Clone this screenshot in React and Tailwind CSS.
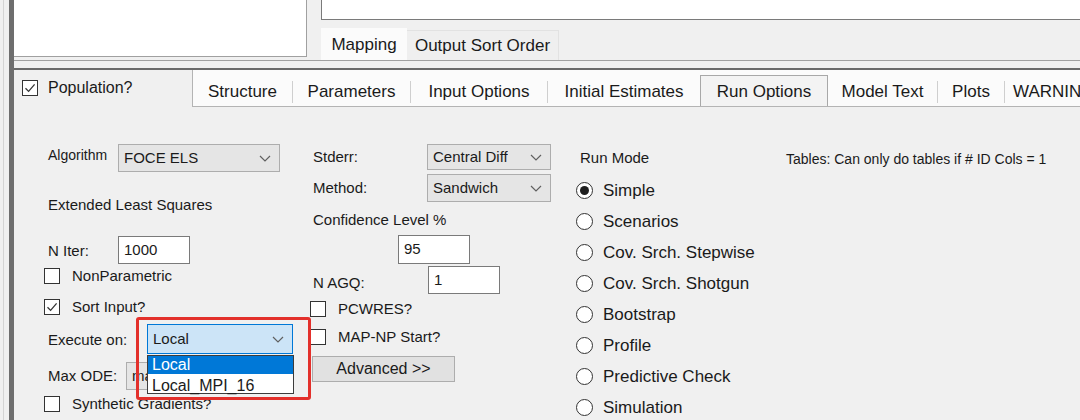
import React from 'react';

const tabs = [
  { label: 'Structure', w: 'w-[100px]' },
  { label: 'Parameters', w: 'w-[118px]' },
  { label: 'Input Options', w: 'w-[137px]' },
  { label: 'Initial Estimates', w: 'w-[152px]', noSep: true },
  { label: 'Run Options', w: 'w-[128px]', active: true },
  { label: 'Model Text', w: 'w-[110px]' },
  { label: 'Plots', w: 'w-[67px]' },
  { label: 'WARNINGS', w: 'w-[110px]' },
];

const runModes = [
  'Simple',
  'Scenarios',
  'Cov. Srch. Stepwise',
  'Cov. Srch. Shotgun',
  'Bootstrap',
  'Profile',
  'Predictive Check',
  'Simulation',
];

function Chevron() {
  return (
    <svg width="12" height="7" viewBox="0 0 12 7" className="shrink-0">
      <path d="M1 1 L6 6 L11 1" fill="none" stroke="#606060" strokeWidth="1.2" />
    </svg>
  );
}

function Check({ checked }) {
  return (
    <span className="w-[16px] h-[16px] border border-[#333333] bg-white flex items-center justify-center shrink-0">
      {checked && (
        <svg width="12" height="12" viewBox="0 0 12 12">
          <path d="M1.5 6.2 L4.6 9.4 L10.6 2.4" fill="none" stroke="#333333" strokeWidth="1.3" />
        </svg>
      )}
    </span>
  );
}

function Radio({ on }) {
  return (
    <span className="w-[17px] h-[17px] rounded-full border border-[#333333] bg-white flex items-center justify-center shrink-0">
      {on && <span className="w-[9px] h-[9px] rounded-full bg-[#1e1e1e]" />}
    </span>
  );
}

function Select({ className, text }) {
  return (
    <div className={'flex items-center justify-between pl-[5px] pr-[8px] border text-[15px] shrink-0 ' + className}>
      <span className="whitespace-nowrap overflow-hidden">{text}</span>
      <Chevron />
    </div>
  );
}

function CheckRow({ label, checked, className }) {
  return (
    <div className={'flex items-center gap-[12px] h-[16px] shrink-0 text-[15px] ' + className}>
      <Check checked={checked} />
      <span className="whitespace-nowrap">{label}</span>
    </div>
  );
}

export default function App() {
  return (
    <div className="relative w-[1080px] h-[420px] overflow-hidden bg-[#f0f0f0] flex text-[#1a1a1a] font-['Liberation_Sans',Arial,sans-serif]">
      {/* left edge */}
      <div className="w-[9px] shrink-0 flex">
        <div className="w-[3px]" />
        <div className="w-[1px] bg-[#d4d4d4]" />
      </div>
      <div className="w-[5px] shrink-0 bg-[#6e6e6e]" />

      <div className="flex-1 min-w-0 flex flex-col overflow-hidden">
        {/* top area */}
        <div className="flex h-[60px] shrink-0">
          <div className="w-[293px] shrink-0 h-[57px] bg-white border-r border-b border-[#a0a0a0]" />
          <div className="w-[14px] shrink-0" />
          <div className="flex-1 min-w-0 flex flex-col">
            <div className="h-[20px] shrink-0 bg-white border-l border-b border-[#7a7a7a]" />
            <div className="flex mt-[8px] h-[32px] shrink-0 items-end text-[17px]">
              <div className="w-[86px] h-[32px] bg-[#fbfbfb] flex items-center justify-center pt-[1px]">Mapping</div>
              <div className="w-[152px] h-[30px] bg-[#efefef] border-t border-r border-[#e2e2e2] flex items-center justify-center -mt-[1px]">
                Output Sort Order
              </div>
            </div>
          </div>
        </div>
        <div className="h-[1px] shrink-0 bg-[#a0a0a0]" />
        <div className="h-[7px] shrink-0" />
        <div className="h-[2px] shrink-0 bg-[#6a6a6a]" />

        {/* tab header */}
        <div className="flex h-[37px] shrink-0">
          <div className="w-[178px] shrink-0 flex items-start pl-[8px] pt-[10px] gap-[10px]">
            <Check checked />
            <span className="text-[16px] leading-[16px]">Population?</span>
          </div>
          <div className="flex-1 min-w-0 overflow-hidden flex bg-[#fbfbfb] border-l border-b border-[#b4b4b4] text-[17px]">
            {tabs.map((t) =>
              t.active ? (
                <div
                  key={t.label}
                  className={t.w + ' shrink-0 mt-[5px] -mb-[1px] bg-[#f3f3f3] border-t border-l border-r border-[#a8a8a8] flex items-center justify-center pt-[1px]'}
                >
                  {t.label}
                </div>
              ) : (
                <div key={t.label} className={t.w + ' shrink-0 flex items-center'}>
                  <span className="flex-1 text-center pt-[8px] whitespace-nowrap">{t.label}</span>
                  {!t.noSep && <span className="w-[1px] h-[22px] mt-[7px] bg-[#cfcfcf]" />}
                </div>
              )
            )}
          </div>
        </div>

        {/* content */}
        <div className="flex items-start shrink-0 pt-[37px] pl-[30px] text-[15px]">
          {/* column 1 */}
          <div className="w-[266px] flex flex-col shrink-0">
            <div className="flex h-[28px]">
              <span className="w-[74px] pl-[4px] text-[14px] pt-[1px]">Algorithm</span>
              <Select className="w-[162px] h-[28px] bg-[#e5e5e5] border-[#adadad]" text="FOCE ELS" />
            </div>
            <div className="mt-[23px] h-[20px] pl-[4px] flex items-center">Extended Least Squares</div>
            <div className="mt-[21px] flex h-[28px] items-end">
              <span className="w-[74px] pl-[4px] pb-[2px]">N Iter:</span>
              <div className="w-[72px] h-[28px] bg-white border border-[#7a7a7a] pl-[5px] flex items-center">1000</div>
            </div>
            <CheckRow className="mt-[4px]" label="NonParametric" />
            <CheckRow className="mt-[15px]" label="Sort Input?" checked />
            <div className="mt-[9px] flex h-[30px] items-center">
              <span className="w-[103px] pl-[4px] pt-[2px]">Execute on:</span>
              <Select className="w-[146px] h-[30px] bg-[#cce4f7] border-[#0078d7]" text="Local" />
            </div>
            <div className="mt-[8px] flex h-[28px] items-center">
              <span className="w-[82px] pl-[4px]">Max ODE:</span>
              <Select className="w-[164px] h-[28px] bg-[#e5e5e5] border-[#adadad]" text="matrix exponent" />
            </div>
            <CheckRow className="mt-[6px]" label="Synthetic Gradients?" />
          </div>

          {/* column 2 */}
          <div className="w-[266px] flex flex-col shrink-0">
            <div className="flex h-[26px] items-center">
              <span className="w-[117px] pl-[3px]">Stderr:</span>
              <Select className="w-[124px] h-[26px] bg-[#e5e5e5] border-[#adadad]" text="Central Diff" />
            </div>
            <div className="mt-[4px] flex h-[28px] items-center">
              <span className="w-[117px] pl-[3px]">Method:</span>
              <Select className="w-[124px] h-[28px] bg-[#e5e5e5] border-[#adadad]" text="Sandwich" />
            </div>
            <div className="mt-[9px] h-[18px] pl-[3px] flex items-center">Confidence Level %</div>
            <div className="mt-[6px] ml-[88px] w-[72px] h-[29px] bg-white border border-[#7a7a7a] pl-[5px] flex items-center">95</div>
            <div className="mt-[2px] flex h-[28px] items-end">
              <span className="w-[118px] pl-[3px]">N AGQ:</span>
              <div className="w-[72px] h-[28px] bg-white border border-[#7a7a7a] pl-[5px] flex items-center">1</div>
            </div>
            <CheckRow className="mt-[7px]" label="PCWRES?" />
            <CheckRow className="mt-[12px]" label="MAP-NP Start?" />
            <div className="mt-[11px] ml-[2px] w-[143px] h-[26px] bg-[#e1e1e1] border border-[#adadad] flex items-center justify-center text-[16px]">
              Advanced &gt;&gt;
            </div>
          </div>

          {/* column 3 */}
          <div className="w-[210px] flex flex-col shrink-0">
            <div className="h-[20px] pl-[4px] flex items-center mt-[4px]">Run Mode</div>
            <div className="flex flex-col mt-[7px]">
              {runModes.map((m, i) => (
                <div key={m} className="h-[31px] shrink-0 flex items-center gap-[10px] text-[17px]">
                  <Radio on={i === 0} />
                  <span className="whitespace-nowrap">{m}</span>
                </div>
              ))}
            </div>
          </div>

          {/* column 4 */}
          <div className="flex-1 min-w-0 text-[14px] whitespace-nowrap mt-[5px]">Tables: Can only do tables if # ID Cols = 1</div>
        </div>
      </div>

      {/* open dropdown list */}
      <div className="absolute left-[147px] top-[355px] w-[147px] h-[39px] bg-white border border-[#3c3c3c] flex flex-col text-[16px]">
        <div className="h-[18px] bg-[#0078d7] text-white pl-[4px] flex items-center">Local</div>
        <div className="flex-1 pl-[4px] flex items-center">Local_MPI_16</div>
      </div>
      {/* red highlight */}
      <div className="absolute left-[136px] top-[317px] w-[175px] h-[83px] border-[3px] border-[#e3302b] rounded-[3px]" />
    </div>
  );
}
